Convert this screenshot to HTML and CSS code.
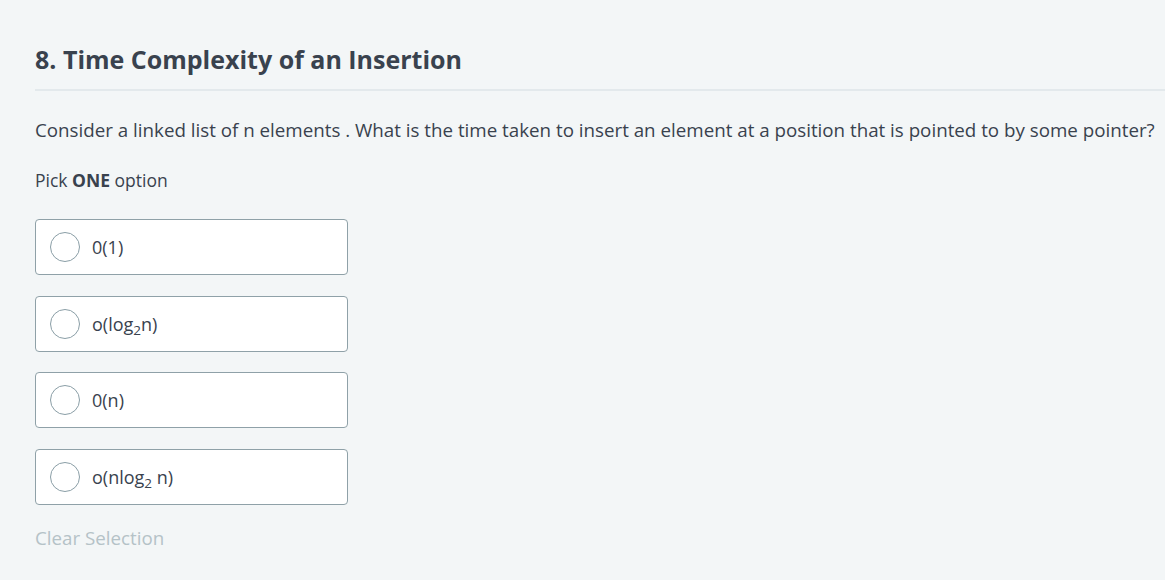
FILE: index.html
```html
<!DOCTYPE html>
<html>
<head>
    <title>Question 8</title>
    <link rel="stylesheet" href="styles.css">
</head>
<body>
    <div class="question">
        <h2 class="question-title">8. Time Complexity of an Insertion</h2>

        <div class="question-body">
            <p class="question-text">Consider a linked list of n elements . What is the time taken to insert an element at a position that is pointed to by some pointer?</p>
            <p class="pick">Pick <strong>ONE</strong> option</p>

            <div class="options">
                <label class="option">
                    <span class="radio"></span>
                    <span class="option-text">0(1)</span>
                </label>
                <label class="option">
                    <span class="radio"></span>
                    <span class="option-text">o(log<sub>2</sub>n)</span>
                </label>
                <label class="option">
                    <span class="radio"></span>
                    <span class="option-text">0(n)</span>
                </label>
                <label class="option">
                    <span class="radio"></span>
                    <span class="option-text">o(nlog<sub>2</sub> n)</span>
                </label>
            </div>

            <div class="clear-selection">Clear Selection</div>
        </div>
    </div>
</body>
</html>
```

FILE: styles.css
```css
body, html {
    margin: 0;
    background-color: #f3f6f7;
    font-family: "Open Sans", "Liberation Sans", sans-serif;
    color: #39424e;
}

.question {
    padding: 41px 0 0 35px;
}

.question-title {
    margin: 0;
    font-size: 25px;
    font-weight: 700;
    line-height: 36px;
    padding-bottom: 12px;
    border-bottom: 2px solid #e3e9ec;
}

.question-body {
    padding-top: 25px;
}

.question-text {
    margin: 0;
    font-size: 18.75px;
    line-height: 28px;
    white-space: nowrap;
}

.pick {
    margin: 23px 0 0 0;
    font-size: 17.5px;
    line-height: 26px;
}

.pick strong {
    font-weight: 700;
}

.options {
    display: flex;
    flex-direction: column;
    gap: 20.5px;
    margin-top: 26px;
    width: 313px;
}

.option {
    display: flex;
    align-items: center;
    height: 56px;
    box-sizing: border-box;
    background-color: #fff;
    border: 1px solid #8fa1a8;
    border-radius: 4px;
    padding-left: 14px;
    cursor: pointer;
}

.radio {
    width: 28px;
    height: 28px;
    border: 1px solid #8a9ea6;
    border-radius: 50%;
    margin-right: 12px;
    flex-shrink: 0;
}

.option-text {
    font-size: 18px;
    line-height: 26px;
}

.option-text sub {
    font-size: 13.5px;
    vertical-align: -4px;
    line-height: 0;
}

.clear-selection {
    margin-top: 19px;
    font-size: 18.75px;
    line-height: 28px;
    color: #b5c2c7;
}
```
